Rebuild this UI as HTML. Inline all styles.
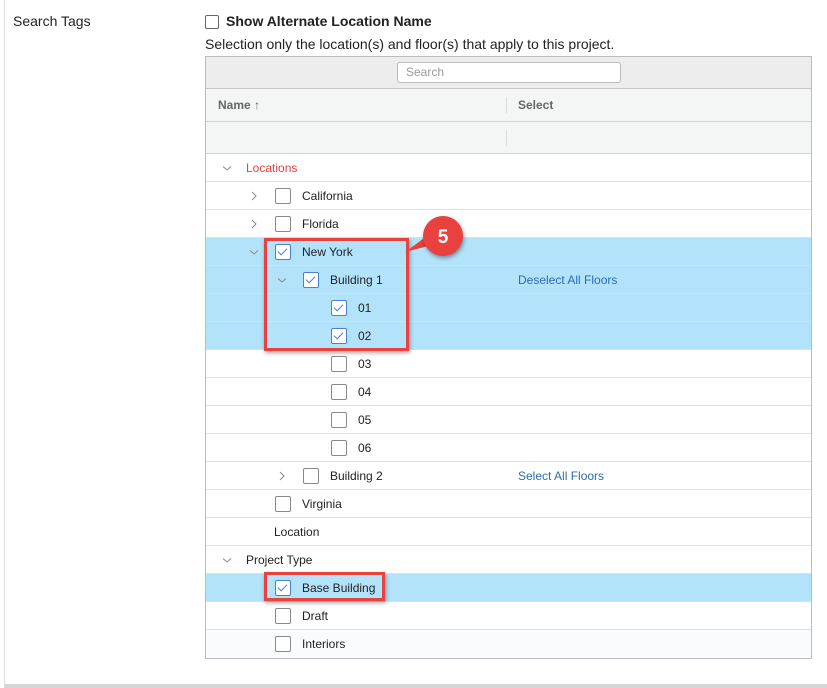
<!DOCTYPE html>
<html><head><style>
body{margin:0;width:827px;height:688px;background:#fff;font-family:"Liberation Sans",Arial,sans-serif;position:relative;overflow:hidden;color:#222}
.frame{position:absolute;left:4px;top:-2px;width:830px;height:686px;border-left:1px solid #ddd;border-bottom:4px solid #d6d6d6}
.abs{position:absolute}
.tbl{position:absolute;left:205px;top:56px;width:605px;height:601px;border:1px solid #b9bcc0}
.row{position:absolute;left:0;width:605px;height:27px;border-bottom:1px solid #e0e0e0;font-size:12px;line-height:29px}
.sel{background:#b3e2fb;border-bottom-color:#cfe3ee}
.cb{position:absolute;top:6px;width:14px;height:14px;border:1px solid #8a8a8a;border-radius:2px;background:#fff}
.cb.on{border-color:#4a7fd6}
.cb.on:after{content:"";position:absolute;left:4px;top:1px;width:4px;height:8px;border:solid #4a7fd6;border-width:0 1.3px 1.3px 0;transform:rotate(45deg)}
.chev{position:absolute;top:9px}
.t{position:absolute;top:0}
.lnk{position:absolute;left:312px;color:#2a6db0}
.redbox{position:absolute;border:3px solid #e8413e;box-shadow:1px 2px 4px rgba(0,0,0,.35)}
</style></head><body>
<div class="frame"></div>
<div class="abs" style="left:13px;top:13px;font-size:14px">Search Tags</div>
<div class="abs" style="left:205px;top:15px;width:12px;height:12px;border:1px solid #666;border-radius:2px"></div>
<div class="abs" style="left:226px;top:13px;font-size:14px;font-weight:bold">Show Alternate Location Name</div>
<div class="abs" style="left:205px;top:36px;font-size:14px;color:#222">Selection only the location(s) and floor(s) that apply to this project.</div>
<div class="tbl">
 <div class="abs" style="left:0;top:0;width:605px;height:31px;background:#ededed;border-bottom:1px solid #c6c6c6"></div>
 <div class="abs" style="left:191px;top:5px;width:222px;height:19px;border:1px solid #bbb;border-radius:3px;background:#fff;font-size:12px;color:#999;line-height:19px;text-indent:8px">Search</div>
 <div class="abs" style="left:0;top:32px;width:605px;height:32px;background:#f4f5f5;border-bottom:1px solid #d2d2d2;font-size:12px;font-weight:bold;color:#666;line-height:32px"><span style="position:absolute;left:12px">Name ↑</span><span style="position:absolute;left:300px;top:8px;height:16px;border-left:1px solid #ddd"></span><span style="position:absolute;left:312px">Select</span></div>
 <div class="abs" style="left:0;top:65px;width:605px;height:31px;background:#f4f5f5;border-bottom:1px solid #d2d2d2"><span style="position:absolute;left:300px;top:8px;height:16px;border-left:1px solid #ddd"></span></div>

 <div class="row" style="top:97px"><svg class="chev" style="left:16px" width="10" height="10"><path d="M1 3.5 L5 7 L9 3.5" fill="none" stroke="#888" stroke-width="1"/></svg><span class="t" style="left:40px;color:#e8413e">Locations</span></div>
 <div class="row" style="top:125px"><svg class="chev" style="left:43px" width="10" height="10"><path d="M3 1 L7 5 L3 9" fill="none" stroke="#888" stroke-width="1"/></svg><span class="cb" style="left:69px"></span><span class="t" style="left:96px">California</span></div>
 <div class="row" style="top:153px"><svg class="chev" style="left:43px" width="10" height="10"><path d="M3 1 L7 5 L3 9" fill="none" stroke="#888" stroke-width="1"/></svg><span class="cb" style="left:69px"></span><span class="t" style="left:96px">Florida</span></div>
 <div class="row sel" style="top:181px"><svg class="chev" style="left:43px" width="10" height="10"><path d="M1 3.5 L5 7 L9 3.5" fill="none" stroke="#888" stroke-width="1"/></svg><span class="cb on" style="left:69px"></span><span class="t" style="left:96px">New York</span></div>
 <div class="row sel" style="top:209px"><svg class="chev" style="left:71px" width="10" height="10"><path d="M1 3.5 L5 7 L9 3.5" fill="none" stroke="#888" stroke-width="1"/></svg><span class="cb on" style="left:97px"></span><span class="t" style="left:124px">Building 1</span><span class="lnk">Deselect All Floors</span></div>
 <div class="row sel" style="top:237px"><span class="cb on" style="left:125px"></span><span class="t" style="left:152px">01</span></div>
 <div class="row sel" style="top:265px"><span class="cb on" style="left:125px"></span><span class="t" style="left:152px">02</span></div>
 <div class="row" style="top:293px"><span class="cb" style="left:125px"></span><span class="t" style="left:152px">03</span></div>
 <div class="row" style="top:321px"><span class="cb" style="left:125px"></span><span class="t" style="left:152px">04</span></div>
 <div class="row" style="top:349px"><span class="cb" style="left:125px"></span><span class="t" style="left:152px">05</span></div>
 <div class="row" style="top:377px"><span class="cb" style="left:125px"></span><span class="t" style="left:152px">06</span></div>
 <div class="row" style="top:405px"><svg class="chev" style="left:71px" width="10" height="10"><path d="M3 1 L7 5 L3 9" fill="none" stroke="#888" stroke-width="1"/></svg><span class="cb" style="left:97px"></span><span class="t" style="left:124px">Building 2</span><span class="lnk">Select All Floors</span></div>
 <div class="row" style="top:433px"><span class="cb" style="left:69px"></span><span class="t" style="left:96px">Virginia</span></div>
 <div class="row" style="top:461px"><span class="t" style="left:68px">Location</span></div>
 <div class="row" style="top:489px"><svg class="chev" style="left:16px" width="10" height="10"><path d="M1 3.5 L5 7 L9 3.5" fill="none" stroke="#888" stroke-width="1"/></svg><span class="t" style="left:40px">Project Type</span></div>
 <div class="row sel" style="top:517px"><span class="cb on" style="left:69px"></span><span class="t" style="left:96px">Base Building</span></div>
 <div class="row" style="top:545px"><span class="cb" style="left:69px"></span><span class="t" style="left:96px">Draft</span></div>
 <div class="row" style="top:573px;background:#fafbfd;border-bottom:none"><span class="cb" style="left:69px"></span><span class="t" style="left:96px">Interiors</span></div>
</div>
<div class="redbox" style="left:264px;top:238px;width:139px;height:107px"></div>
<div class="redbox" style="left:264px;top:572px;width:115px;height:23px"></div>
<svg class="abs" style="left:400px;top:212px" width="70" height="50"><polygon points="5,40 30,22 36,32" fill="#e8413e"/><circle cx="43" cy="24" r="20" fill="#e8413e" style="filter:drop-shadow(1px 2px 2px rgba(0,0,0,.4))"/><text x="43" y="31" font-size="19" font-weight="bold" fill="#fff" text-anchor="middle" font-family="Liberation Sans">5</text></svg>
</body></html>
